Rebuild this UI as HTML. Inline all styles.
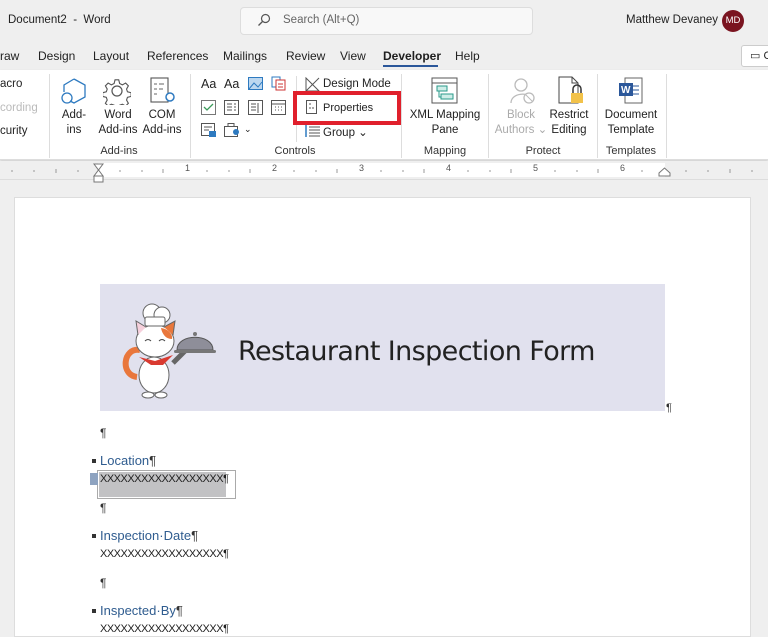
<!DOCTYPE html>
<html><head><meta charset="utf-8"><style>
*{margin:0;padding:0;box-sizing:border-box}
body{width:768px;height:627px;overflow:hidden;background:#efefef;font-family:"Liberation Sans",sans-serif;font-size:12px;color:#222;position:relative}
.a{position:absolute;white-space:nowrap}
.sep{position:absolute;width:1px;background:#ddd;top:74px;height:84px}
.lbl{position:absolute;top:145px;font-size:11px;color:#333;text-align:center}
.big{position:absolute;text-align:center;font-size:11.5px;line-height:15px;color:#222}
.pm{color:#333}
</style></head><body>
<!-- title bar -->
<div class="a" style="left:0;top:0;width:768px;height:40px;background:#efefef"></div>
<div class="a" style="left:8px;top:14px;font-size:11.5px">Document2 &nbsp;- &nbsp;Word</div>
<div class="a" style="left:240px;top:7px;width:293px;height:28px;background:#f8f8f8;border:1px solid #ddd;border-radius:4px"></div>
<svg class="a" style="left:257px;top:13px" width="14" height="14"><circle cx="8.5" cy="5.5" r="4" fill="none" stroke="#555" stroke-width="1.2"/><line x1="5.5" y1="8.5" x2="1.5" y2="12.5" stroke="#555" stroke-width="1.3"/></svg>
<div class="a" style="left:283px;top:14px;font-size:11.5px;color:#666">Search (Alt+Q)</div>
<div class="a" style="left:626px;top:14px;font-size:11.5px">Matthew Devaney</div>
<div class="a" style="left:722px;top:10px;width:22px;height:22px;border-radius:50%;background:#7a1420;color:#fff;font-size:9.5px;line-height:22px;text-align:center">MD</div>
<!-- tabs -->
<div class="a" style="left:0;top:49px;font-size:12px">raw</div>
<div class="a" style="left:38px;top:49px">Design</div>
<div class="a" style="left:93px;top:49px">Layout</div>
<div class="a" style="left:147px;top:49px">References</div>
<div class="a" style="left:223px;top:49px">Mailings</div>
<div class="a" style="left:286px;top:49px">Review</div>
<div class="a" style="left:340px;top:49px">View</div>
<div class="a" style="left:383px;top:49px;font-weight:bold;color:#1f1f1f">Developer</div>
<div class="a" style="left:383px;top:65px;width:55px;height:2px;background:#2b579a"></div>
<div class="a" style="left:455px;top:49px">Help</div>
<div class="a" style="left:741px;top:45px;width:30px;height:22px;background:#fff;border:1px solid #ccc;border-radius:3px;font-size:11px;padding:3px 0 0 8px">▭ C</div>
<!-- ribbon -->
<div class="a" style="left:0;top:70px;width:768px;height:90px;background:#fff;border-bottom:1px solid #ddd;box-shadow:0 1px 2px #ccc"></div>
<div class="a" style="left:0;top:78px;font-size:11.5px">acro</div>
<div class="a" style="left:0;top:102px;font-size:11.5px;color:#bbb">cording</div>
<div class="a" style="left:0;top:125px;font-size:11.5px">curity</div>
<div class="sep" style="left:49px"></div>
<svg class="a" style="left:61px;top:77px" width="28" height="28"><path d="M13 2 L24 8 V20 L13 26 L9 24" fill="none" stroke="#2e7ac0" stroke-width="1.3"/><path d="M13 2 L3 8 V15" fill="none" stroke="#2e7ac0" stroke-width="1.3"/><circle cx="6" cy="21" r="5" fill="none" stroke="#2e7ac0" stroke-width="1.3"/></svg>
<div class="big" style="left:56px;top:108px;width:36px">Add-<br>ins</div>
<svg class="a" style="left:103px;top:77px" width="28" height="28"><circle cx="14" cy="14" r="5" fill="none" stroke="#555" stroke-width="1.2"/><path d="M12 2h4l1 4 3 1.5 3.5-2 3 3-2 3.5 1 3 4 1v4l-4 1-1 3 2 3.5-3 3-3.5-2-3 1-1 4h-4l-1-4-3-1-3.5 2-3-3 2-3.5-1-3-4-1v-4l4-1 1-3-2-3.5 3-3 3.5 2 3-1.5z" transform="translate(1,1) scale(0.92)" fill="none" stroke="#555" stroke-width="1.2"/></svg>
<div class="big" style="left:96px;top:108px;width:44px">Word<br>Add-ins</div>
<svg class="a" style="left:149px;top:76px" width="28" height="30"><rect x="2" y="2" width="17" height="24" fill="none" stroke="#555" stroke-width="1.1"/><path d="M5 8h3M10 8h5M5 13h3M10 13h4M5 18h3" stroke="#666"/><circle cx="21" cy="21" r="4" fill="#fff" stroke="#2e7ac0" stroke-width="1.5"/></svg>
<div class="big" style="left:140px;top:108px;width:44px">COM<br>Add-ins</div>
<div class="lbl" style="left:56px;width:126px">Add-ins</div>
<div class="sep" style="left:190px"></div>
<!-- controls -->
<div class="a" style="left:201px;top:77px;font-size:12.5px">Aa</div>
<div class="a" style="left:224px;top:77px;font-size:12.5px">Aa</div>
<svg class="a" style="left:248px;top:77px" width="15" height="14"><rect x="0.5" y="0.5" width="14" height="12" fill="#bcd7ef" stroke="#2e7ac0"/><path d="M1 12 L6 6 L10 10 L14 5" fill="none" stroke="#2e7ac0"/></svg>
<svg class="a" style="left:271px;top:76px" width="15" height="16"><rect x="1" y="1" width="8" height="10" fill="none" stroke="#2e7ac0"/><rect x="5" y="4" width="9" height="10" fill="#fff" stroke="#c33"/><path d="M7 8h5M7 11h5" stroke="#c33"/></svg>
<svg class="a" style="left:201px;top:100px" width="15" height="15"><rect x="0.5" y="0.5" width="14" height="14" fill="none" stroke="#777"/><path d="M3 7 L6 10 L12 4" fill="none" stroke="#3a9a5a" stroke-width="1.3"/></svg>
<svg class="a" style="left:224px;top:100px" width="15" height="15"><rect x="0.5" y="0.5" width="14" height="14" fill="none" stroke="#555"/><path d="M3 4h5M3 7h5M3 10h5M10 4h2M10 7h2M10 10h2" stroke="#555"/></svg>
<svg class="a" style="left:248px;top:100px" width="15" height="15"><rect x="0.5" y="0.5" width="14" height="14" fill="none" stroke="#555"/><path d="M3 4h5M3 7h5M3 10h5M10 3v10" stroke="#555"/></svg>
<svg class="a" style="left:271px;top:100px" width="15" height="15"><rect x="0.5" y="0.5" width="14" height="14" fill="none" stroke="#555"/><path d="M1 4h13M4 7h1M7 7h1M10 7h1M4 10h1M7 10h1M10 10h1" stroke="#555"/></svg>
<svg class="a" style="left:201px;top:123px" width="16" height="15"><rect x="0.5" y="0.5" width="13" height="12" fill="none" stroke="#555"/><path d="M3 4h8M3 7h5" stroke="#555"/><rect x="8" y="8" width="7" height="6" fill="#2e7ac0"/></svg>
<svg class="a" style="left:224px;top:123px" width="18" height="15"><rect x="0.5" y="3.5" width="13" height="10" fill="none" stroke="#555"/><rect x="4" y="0.5" width="6" height="3" fill="none" stroke="#555"/><circle cx="12" cy="9" r="3" fill="#2e7ac0"/></svg>
<div class="a" style="left:244px;top:124px;font-size:9px">⌄</div>
<div class="a" style="left:296px;top:76px;width:1px;height:66px;background:#ddd"></div>
<svg class="a" style="left:305px;top:77px" width="15" height="15"><path d="M1 14 V1 L14 14 Z" fill="none" stroke="#555"/><path d="M1 14 L14 1" stroke="#555"/></svg>
<div class="a" style="left:323px;top:78px;font-size:11.5px">Design Mode</div>
<div class="a" style="left:293px;top:91px;width:108px;height:34px;border:4px solid #e0202c"></div>
<svg class="a" style="left:306px;top:100px" width="12" height="15"><rect x="0.5" y="0.5" width="10" height="13" fill="none" stroke="#555"/><path d="M3 4h2M3 8h2M6 8h2" stroke="#555"/></svg>
<div class="a" style="left:323px;top:102px;font-size:11px">Properties</div>
<svg class="a" style="left:305px;top:124px" width="16" height="14"><path d="M4 3h11M4 6h11M4 9h11M4 12h11" stroke="#555"/><path d="M1 1v12" stroke="#2e7ac0" stroke-width="1.5"/></svg>
<div class="a" style="left:323px;top:125px;font-size:11.5px">Group ⌄</div>
<div class="lbl" style="left:255px;width:80px">Controls</div>
<div class="sep" style="left:401px"></div>
<svg class="a" style="left:431px;top:77px" width="28" height="28"><rect x="1" y="1" width="25" height="25" fill="#fff" stroke="#555"/><path d="M1 6h25" stroke="#555"/><rect x="6" y="9" width="10" height="5" fill="#cfeee8" stroke="#2a9a8a"/><rect x="10" y="17" width="12" height="5" fill="#cfeee8" stroke="#2a9a8a"/><path d="M8 14v6h2" stroke="#2a9a8a" fill="none"/></svg>
<div class="big" style="left:405px;top:108px;width:80px">XML Mapping<br>Pane</div>
<div class="lbl" style="left:405px;width:80px">Mapping</div>
<div class="sep" style="left:488px"></div>
<svg class="a" style="left:509px;top:77px" width="28" height="28"><circle cx="12" cy="8" r="6" fill="none" stroke="#bbb" stroke-width="1.3"/><path d="M2 26 C2 15 22 15 22 22" fill="none" stroke="#bbb" stroke-width="1.3"/><circle cx="20" cy="21" r="5" fill="#fff" stroke="#bbb" stroke-width="1.3"/><path d="M17 18l6 6" stroke="#bbb"/></svg>
<div class="big" style="left:494px;top:108px;width:54px;color:#aaa">Block<br>Authors ⌄</div>
<svg class="a" style="left:558px;top:76px" width="28" height="30"><path d="M1 1h13l6 6v20H1z" fill="#fff" stroke="#444"/><path d="M14 1v6h6" fill="none" stroke="#444"/><rect x="13" y="17" width="12" height="10" fill="#f2c24a"/><path d="M15 17v-4a4 4 0 0 1 8 0v4" fill="none" stroke="#333" stroke-width="1.5"/></svg>
<div class="big" style="left:546px;top:108px;width:46px">Restrict<br>Editing</div>
<div class="lbl" style="left:500px;width:86px">Protect</div>
<div class="sep" style="left:597px"></div>
<svg class="a" style="left:618px;top:77px" width="26" height="28"><rect x="7" y="1" width="17" height="25" fill="#fff" stroke="#666"/><path d="M13 9h8M13 13h8M13 17h8" stroke="#2b579a"/><rect x="1" y="6" width="14" height="13" fill="#2b579a"/><text x="3" y="16" fill="#fff" font-size="10" font-weight="bold" font-family="Liberation Sans">W</text></svg>
<div class="big" style="left:600px;top:108px;width:62px">Document<br>Template</div>
<div class="lbl" style="left:600px;width:62px">Templates</div>
<div class="sep" style="left:666px"></div>
<!-- ruler -->
<div class="a" style="left:0;top:161px;width:768px;height:19px;background:#efefef;border-bottom:1px solid #ddd"></div>
<div class="a" style="left:98px;top:163px;width:567px;height:14px;background:#fff"></div>
<div class="a" style="left:0;top:163px;width:768px;font-size:9px;color:#555;letter-spacing:0">
<span class="a" style="left:185px">1</span><span class="a" style="left:272px">2</span><span class="a" style="left:359px">3</span><span class="a" style="left:446px">4</span><span class="a" style="left:533px">5</span><span class="a" style="left:620px">6</span></div>
<svg class="a" style="left:0;top:163px" width="768" height="20">
<g stroke="#999">
<path d="M12 7v2M34 7v2M56 6v4M78 7v2M120 7v2M142 7v2M163 6v4M207 7v2M229 7v2M250 6v4M294 7v2M316 7v2M337 6v4M381 7v2M403 7v2M424 6v4M468 7v2M490 7v2M511 6v4M555 7v2M577 7v2M598 6v4M642 7v2M686 7v2M708 7v2M730 6v4M752 7v2"/></g>
<path d="M94 1h9l-4.5 6zM94 13h9l-4.5-6z" fill="#fff" stroke="#777"/><rect x="94" y="13" width="9" height="6" fill="#fff" stroke="#777"/>
<path d="M659 13h11v-3l-5.5-5-5.5 5z" fill="#fff" stroke="#777"/></svg>
<!-- page -->
<div class="a" style="left:14px;top:197px;width:737px;height:440px;background:#fff;border:1px solid #ddd"></div>
<div class="a" style="left:100px;top:284px;width:565px;height:127px;background:#e1e1ee"></div>
<!-- cat -->
<svg class="a" style="left:115px;top:295px" width="110" height="105">
<path d="M25 55 C8 52 5 80 22 82" fill="none" stroke="#e9773c" stroke-width="6"/>
<ellipse cx="39" cy="80" rx="15" ry="18" fill="#fff" stroke="#666"/>
<ellipse cx="33" cy="100" rx="6" ry="3" fill="#fff" stroke="#666"/><ellipse cx="46" cy="100" rx="6" ry="3" fill="#fff" stroke="#666"/>
<ellipse cx="40" cy="46" rx="19" ry="16" fill="#fff" stroke="#666"/>
<path d="M23 40 L21 26 L31 32" fill="#f6d0dc" stroke="#666"/><path d="M49 32 L60 26 L58 40" fill="#e9773c" stroke="#666"/>
<path d="M46 33 C54 34 58 40 57 44 C50 44 47 38 46 33Z" fill="#e9773c"/>
<path d="M30 46q3-3 6 0M44 46q3-3 6 0" fill="none" stroke="#444"/>
<path d="M24 62 L40 66 L58 60 L48 70 L36 70Z" fill="#d93a30"/>
<circle cx="37" cy="18" r="9" fill="#fff" stroke="#666"/><circle cx="47" cy="20" r="8" fill="#fff" stroke="#666"/><rect x="30" y="22" width="20" height="9" rx="2" fill="#fff" stroke="#666"/>
<path d="M58 68 L70 56" stroke="#666" stroke-width="5"/>
<path d="M62 55 C62 38 98 38 98 55Z" fill="#8e8e99" stroke="#555"/><rect x="59" y="55" width="42" height="3" rx="1.5" fill="#777"/><circle cx="80" cy="39" r="2" fill="#777"/>
</svg>
<div class="a" style="left:238px;top:336px;font-size:27px;color:#222;font-family:'DejaVu Sans','Liberation Sans',sans-serif;letter-spacing:-0.6px">Restaurant Inspection Form</div>
<div class="a pm" style="left:666px;top:402px;font-size:11px">¶</div>
<div class="a pm" style="left:100px;top:426px;font-size:12px">¶</div>
<div class="a" style="left:92px;top:459px;width:4px;height:4px;background:#333"></div>
<div class="a" style="left:100px;top:453px;font-size:13px;color:#2f5c8f">Location<span class="pm">¶</span></div>
<div class="a" style="left:97px;top:470px;width:139px;height:29px;border:1px solid #aaa;background:#fff"></div>
<div class="a" style="left:99px;top:472px;width:127px;height:25px;background:#c2c2c4"></div>
<div class="a" style="left:90px;top:473px;width:8px;height:12px;background:#8ea3c0"></div>
<div class="a" style="left:100px;top:473px;font-size:11px;letter-spacing:-0.5px">XXXXXXXXXXXXXXXXXX¶</div>
<div class="a pm" style="left:100px;top:501px;font-size:12px">¶</div>
<div class="a" style="left:92px;top:534px;width:4px;height:4px;background:#333"></div>
<div class="a" style="left:100px;top:528px;font-size:13px;color:#2f5c8f">Inspection·Date<span class="pm">¶</span></div>
<div class="a" style="left:100px;top:548px;font-size:11px;letter-spacing:-0.5px">XXXXXXXXXXXXXXXXXX¶</div>
<div class="a pm" style="left:100px;top:576px;font-size:12px">¶</div>
<div class="a" style="left:92px;top:609px;width:4px;height:4px;background:#333"></div>
<div class="a" style="left:100px;top:603px;font-size:13px;color:#2f5c8f">Inspected·By<span class="pm">¶</span></div>
<div class="a" style="left:100px;top:623px;font-size:11px;letter-spacing:-0.5px">XXXXXXXXXXXXXXXXXX¶</div>
</body></html>
